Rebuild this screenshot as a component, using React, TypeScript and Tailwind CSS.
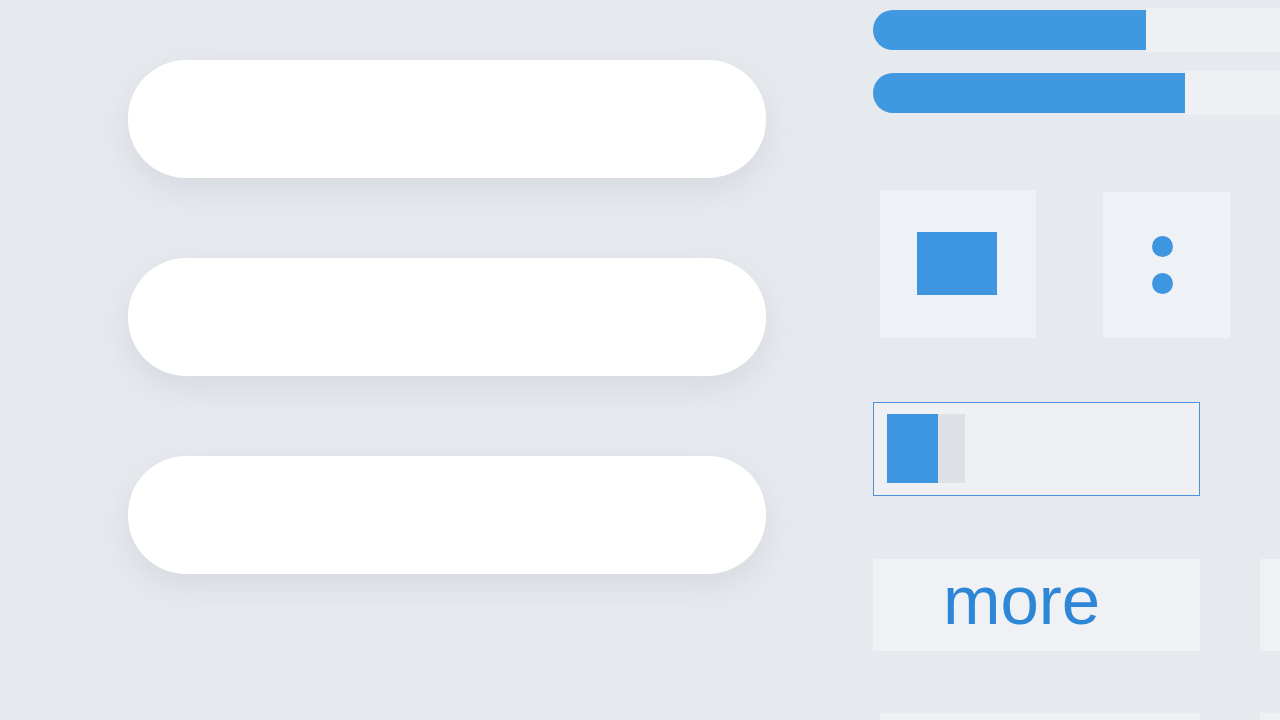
const pills = ["a", "b", "c"];

function Pill() {
  return (
    <div className="h-[118px] w-[638px] shrink-0 rounded-[58px] bg-white shadow-[0_12px_28px_rgba(160,170,185,0.22)]" />
  );
}

function ProgressRow({ fill }: { fill: number }) {
  return (
    <div className="flex h-[44px] shrink-0 items-center">
      <div className="h-[40px] rounded-l-full bg-[#3f98e0]" style={{ width: fill }} />
      <div className="h-[44px] flex-1 bg-[#eef0f3]" />
    </div>
  );
}

export default function App() {
  return (
    <div className="flex h-[720px] w-[1280px] overflow-hidden bg-[#e6e9ed] font-['Liberation_Sans',sans-serif]">
      <div className="flex w-[873px] shrink-0 flex-col gap-[80px] pl-[128px] pt-[60px]">
        {pills.map((p) => (
          <Pill key={p} />
        ))}
      </div>

      <div className="flex flex-1 flex-col pt-[8px]">
        <ProgressRow fill={273} />
        <div className="mt-[19px] shrink-0">
          <ProgressRow fill={312} />
        </div>

        <div className="mt-[75px] flex shrink-0 items-start">
          <div className="ml-[7px] h-[148px] w-[156px] bg-[#eef1f5] pl-[37px] pt-[42px]">
            <div className="h-[63px] w-[80px] bg-[#3d96df]" />
          </div>
          <div className="ml-[67px] mt-[2px] flex h-[146px] w-[127px] flex-col items-center gap-[16px] bg-[#eef1f5] pt-[44px] pr-[8px]">
            <div className="h-[21px] w-[21px] rounded-full bg-[#3d96df]" />
            <div className="h-[21px] w-[21px] rounded-full bg-[#3d96df]" />
          </div>
        </div>

        <div className="mt-[64px] flex h-[94px] w-[327px] shrink-0 border border-[#4a93da] bg-[#eef0f3] pl-[13px] pt-[11px]">
          <div className="h-[69px] w-[51px] bg-[#3d96df]" />
          <div className="h-[69px] w-[27px] bg-[#dde0e4]" />
        </div>

        <div className="mt-[63px] flex shrink-0 gap-[60px]">
          <div className="flex h-[92px] w-[327px] shrink-0 items-center bg-[#eff1f4] pb-[10px] pl-[70px]">
            <span className="text-[69px] leading-none text-[#2d86d6]">more</span>
          </div>
          <div className="h-[92px] w-[40px] shrink-0 bg-[#eff1f4]" />
        </div>

        <div className="mt-[62px] flex shrink-0 gap-[60px]">
          <div className="ml-[7px] h-[40px] w-[320px] shrink-0 bg-[#eef1f4]" />
          <div className="h-[40px] w-[40px] shrink-0 bg-[#eef1f4]" />
        </div>
      </div>
    </div>
  );
}
